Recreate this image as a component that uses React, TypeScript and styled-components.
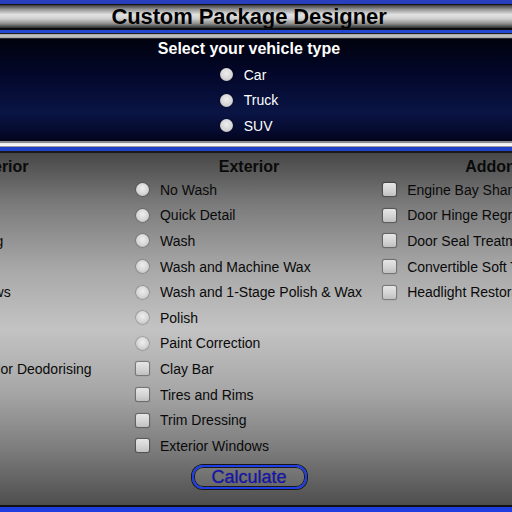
import React from "react";
import styled, { createGlobalStyle } from "styled-components";

const Global = createGlobalStyle`
  html, body { margin: 0; padding: 0; background: #4a4a4a; }
  body { font-family: "Liberation Sans", Arial, sans-serif; overflow: hidden; }
  * { box-sizing: border-box; }
`;

const Page = styled.div`
  width: 512px;
  height: 512px;
  overflow: hidden;
  display: flex;
  flex-direction: column;
`;

const Stripe = styled.div<{ $h: number; $c: string }>`
  height: ${(p) => p.$h}px;
  background: ${(p) => p.$c};
  flex: none;
`;

const TitleBar = styled.div`
  height: 23px;
  flex: none;
  background: linear-gradient(#3c3c3c 0%, #9a9a9a 20%, #e2e2e2 42%, #cfcfcf 60%, #8a8a8a 82%, #2a2a2a 100%);
  padding-right: 14px;
  text-align: center;
  font-weight: bold;
  font-size: 22px;
  letter-spacing: -0.1px;
  line-height: 24px;
  color: #000;
  text-shadow: 0 0 1px rgba(255, 255, 255, 0.3);
`;

const VehiclePanel = styled.div`
  height: 102px;
  flex: none;
  background: linear-gradient(#01020e 0%, #03072a 35%, #0a1545 72%, #050a2c 92%, #02041a 100%);
  padding-right: 14px;
  display: flex;
  flex-direction: column;
  align-items: center;
  color: #fff;
`;

const PanelTitle = styled.div`
  font-weight: bold;
  font-size: 16px;
  line-height: 20px;
  height: 20px;
`;

const List = styled.div<{ $top?: number }>`
  display: flex;
  flex-direction: column;
  margin-top: ${(p) => p.$top ?? 0}px;
`;

const Row = styled.div<{ $h?: number }>`
  height: ${(p) => p.$h ?? 25.6}px;
  display: flex;
  align-items: center;
  gap: 11px;
  font-size: 14px;
  white-space: nowrap;
`;

const Radio = styled.span`
  width: 13px;
  height: 13px;
  border-radius: 50%;
  flex: none;
  background: radial-gradient(circle at 50% 40%, #eeeeee 0%, #d6d6d6 55%, #b2b2b2 100%);
  box-shadow: 0 0 1px 0.5px rgba(0, 0, 0, 0.35);
`;

const Check = styled.span`
  width: 13px;
  height: 13px;
  border-radius: 2px;
  flex: none;
  background: linear-gradient(#e6e6e6, #d2d2d2 60%, #c0c0c0);
  box-shadow: 0 0 1px 0.5px rgba(0, 0, 0, 0.35);
`;

const Options = styled.div`
  flex: 1;
  background: linear-gradient(#474747 0%, #7c7c7c 15%, #a8a8a8 33%, #c3c3c3 50%, #a6a6a6 68%, #7a7a7a 85%, #4e4e4e 100%);
  padding: 4px 14px 0 0;
  display: flex;
  flex-direction: column;
  align-items: center;
`;

const Columns = styled.div`
  width: 498px;
  display: flex;
  justify-content: center;
`;

const Column = styled.div<{ $shift?: number }>`
  width: 248px;
  flex: none;
  display: flex;
  flex-direction: column;
  align-items: center;
  color: #0a0a0a;
  margin-left: ${(p) => p.$shift ?? 0}px;
  margin-right: ${(p) => -(p.$shift ?? 0)}px;
`;

const ColumnTitle = styled.div`
  font-weight: bold;
  font-size: 16px;
  line-height: 20px;
  height: 20px;
`;

const CalcButton = styled.button`
  margin-top: 6px;
  width: 115px;
  height: 24px;
  border-radius: 11px;
  border: 2px solid #1f3ee6;
  box-shadow: 0 0 0 1px #151515, inset 0 0 0 1px #1a1a1a;
  background: linear-gradient(#7a7a7a, #686868);
  color: #1414b4;
  font-family: "Liberation Sans", Arial, sans-serif;
  font-size: 18px;
  line-height: 18px;
  padding: 0;
  text-shadow: 0 0 1px rgba(0, 0, 0, 0.4);
`;

type Item = { label: string; kind: "radio" | "check" };

const interior: Item[] = [
  { label: "None", kind: "radio" },
  { label: "Dusting", kind: "radio" },
  { label: "Vacuuming", kind: "radio" },
  { label: "Shampoo", kind: "radio" },
  { label: "All Windows", kind: "check" },
  { label: "Leather", kind: "check" },
  { label: "Carpets", kind: "check" },
  { label: "Interior Odor Deodorising", kind: "check" },
];

const exterior: Item[] = [
  { label: "No Wash", kind: "radio" },
  { label: "Quick Detail", kind: "radio" },
  { label: "Wash", kind: "radio" },
  { label: "Wash and Machine Wax", kind: "radio" },
  { label: "Wash and 1-Stage Polish & Wax", kind: "radio" },
  { label: "Polish", kind: "radio" },
  { label: "Paint Correction", kind: "radio" },
  { label: "Clay Bar", kind: "check" },
  { label: "Tires and Rims", kind: "check" },
  { label: "Trim Dressing", kind: "check" },
  { label: "Exterior Windows", kind: "check" },
];

const addons: Item[] = [
  { label: "Engine Bay Shampoo", kind: "check" },
  { label: "Door Hinge Regreasing", kind: "check" },
  { label: "Door Seal Treatment", kind: "check" },
  { label: "Convertible Soft Top Treatments", kind: "check" },
  { label: "Headlight Restoration", kind: "check" },
];

const OptionColumn = ({ title, items, shift }: { title: string; items: Item[]; shift?: number }) => (
  <Column $shift={shift}>
    <ColumnTitle>{title}</ColumnTitle>
    <List>
      {items.map((it) => (
        <Row key={it.label}>
          {it.kind === "radio" ? <Radio /> : <Check />}
          <span>{it.label}</span>
        </Row>
      ))}
    </List>
  </Column>
);

export default function App() {
  return (
    <Page>
      <Global />
      <Stripe $h={4} $c="#2a3fbd" />
      <Stripe $h={1} $c="#151515" />
      <TitleBar>Custom Package Designer</TitleBar>
      <Stripe $h={2} $c="#0c0c0c" />
      <Stripe $h={3} $c="#2447d2" />
      <Stripe $h={1} $c="#202020" />
      <Stripe $h={4} $c="linear-gradient(#9e9e9e, #c8c8c8 50%, #a0a0a0)" />
      <Stripe $h={1} $c="#2a2a30" />
      <VehiclePanel>
        <PanelTitle>Select your vehicle type</PanelTitle>
        <List $top={3}>
          {["Car", "Truck", "SUV"].map((v) => (
            <Row key={v} $h={25.5}>
              <Radio />
              <span>{v}</span>
            </Row>
          ))}
        </List>
      </VehiclePanel>
      <Stripe $h={2} $c="#8a8a90" />
      <Stripe $h={3} $c="linear-gradient(#e8e8e8, #ffffff)" />
      <Stripe $h={1} $c="#9a9aa0" />
      <Stripe $h={4} $c="#2340c8" />
      <Stripe $h={2} $c="#1a1a1a" />
      <Options>
        <Columns>
          <OptionColumn title="Interior" items={interior} />
          <OptionColumn title="Exterior" items={exterior} />
          <OptionColumn title="Addons" items={addons} shift={-2} />
        </Columns>
        <CalcButton>Calculate</CalcButton>
      </Options>
      <Stripe $h={2} $c="#111" />
      <Stripe $h={5} $c="#1f3ee0" />
    </Page>
  );
}
